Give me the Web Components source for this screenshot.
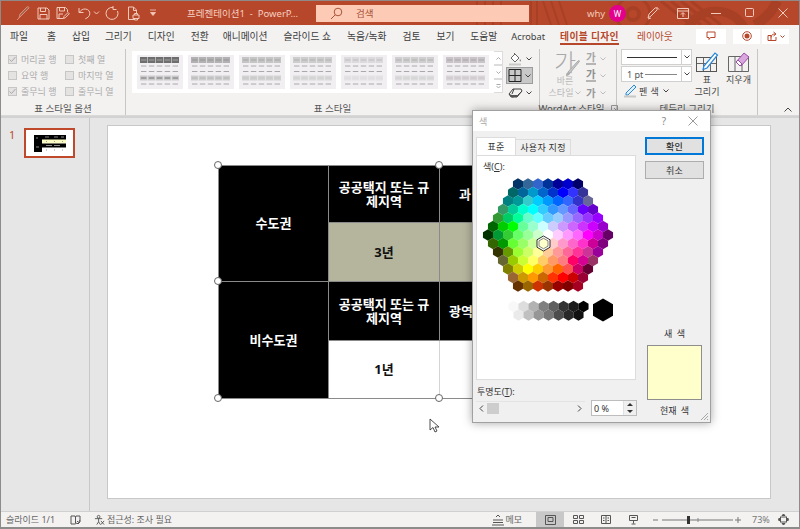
<!DOCTYPE html>
<html lang="ko">
<head>
<meta charset="utf-8">
<title>PowerPoint</title>
<style>
  html, body { margin: 0; padding: 0; background: #fff; overflow: hidden; }
  body { font-family: "Noto Sans", "Noto Sans CJK KR", sans-serif; }
</style>
</head>
<body>
<pp-app>
  <pp-titlebar></pp-titlebar>
  <pp-tabs></pp-tabs>
  <pp-ribbon></pp-ribbon>
  <pp-workspace></pp-workspace>
  <pp-statusbar></pp-statusbar>
  <pp-color-dialog slot="dialog"></pp-color-dialog>
</pp-app>

<script>
const FONT = `"Noto Sans", "Noto Sans CJK KR", sans-serif`;

class PpApp extends HTMLElement {
  constructor() {
    super();
    this.attachShadow({ mode: "open" });
    this.shadowRoot.innerHTML = `
      <style>
        :host {
          display: flex;
          flex-direction: column;
          position: relative;
          box-sizing: border-box;
          width: 800px;
          height: 529px;
          overflow: hidden;
          border-top: 1px solid #8f8a88;
          border-left: 1px solid #8c8c8c;
          border-right: 1px solid #8c8c8c;
          border-bottom: 2px solid #8c8c8c;
          font-family: ${FONT};
        }
      </style>
      <slot></slot>
      <slot name="dialog"></slot>
    `;
  }
}

class PpTitlebar extends HTMLElement {
  constructor() {
    super();
    this.attachShadow({ mode: "open" });
    this.shadowRoot.innerHTML = `
      <style>
        :host {
          display: flex;
          align-items: center;
          position: relative;
          flex: none;
          height: 24px;
          background: #b7472a;
          color: #f6d3c7;
          font-size: 9.5px;
          overflow: hidden;
        }
        svg { display: block; flex: none; }
        .ic { fill: none; stroke: #f3c9bb; stroke-width: 1; }
        .quick { display: flex; align-items: center; width: 186px; padding-left: 15px; box-sizing: border-box; position: relative; }
        .title { width: 129px; white-space: nowrap; color: #f5cfc2; position: relative; }
        .search {
          display: flex; align-items: center; gap: 13px; position: relative;
          width: 213px; height: 17px; box-sizing: border-box; padding-left: 14px;
          background: #fdcbb5; color: #a8543c; font-size: 9.5px;
        }
        .right { display: flex; align-items: center; margin-left: auto; position: relative; }
        .why { color: #f3c9bb; font-size: 9.5px; width: 18px; margin-right: 4px; }
        .avatar {
          width: 17px; height: 17px; border-radius: 50%;
          background: #e3008c; color: #fff; font-size: 8px;
          display: flex; align-items: center; justify-content: center;
          margin-right: 20px;
        }
        .pattern { position: absolute; left: 0; top: 0; }
      </style>
      <svg class="pattern" width="800" height="24" viewBox="0 0 800 24" fill="none" stroke="#a84025">
        <path d="M476 0v24M484 0v24M492 0v24M500 0v24" stroke-width="2"/>
        <path d="M530 0v24M536 0v24M542 0l8 24M550 0l8 24M558 0l8 24" stroke-width="2"/>
        <circle cx="632" cy="13" r="6" stroke-width="4"/>
        <circle cx="632" cy="13" r="17" stroke-width="3"/>
        <path d="M660 0l30 24M670 0l30 24M680 0l30 24M690 0l30 24" stroke-width="3"/>
        <circle cx="715" cy="42" r="32" stroke-width="9"/>
        <path d="M776 0c-4 10-12 18-22 24" stroke-width="10"/>
      </svg>
      <div class="quick">
        <svg class="ic" width="14" height="16" viewBox="0 0 14 16" style="margin-right:7px"><path d="M3 13l1-4 7-7c1-1 2 0 2 1l-7 7z" fill="#a8644f" stroke="#d98d78"/><path d="M1 15l2-2" stroke="#d98d78"/></svg>
        <svg class="ic" width="13" height="13" viewBox="0 0 13 13" style="margin-right:6px"><path d="M1 1h9l2 2v9H1zM3.500 1v3.500h5V1M3 12V7.500h7V12"/></svg>
        <svg class="ic" width="14" height="14" viewBox="0 0 14 14" style="margin-right:7px"><path d="M7 12.500H1v-11h8.500l2 2V6M3.500 2v3h5V2M3 12V8h4"/><path d="M7.500 12.500l.5-2 4-4 1.300 1.300-4 4z"/></svg>
        <svg class="ic" width="15" height="13" viewBox="0 0 15 13" style="margin-right:1px"><path d="M2 1v4.500h4.500M2.300 5.300C4 3 6 1.800 8.500 2c3 .3 4.500 2.500 4.300 4.800-.2 2.300-2 4-4.500 5"/></svg>
        <svg width="7" height="4" viewBox="0 0 7 4" style="margin-right:5px"><path d="M1 .5l2.500 2.500L6 .5" fill="none" stroke="#f3c9bb"/></svg>
        <svg class="ic" width="14" height="14" viewBox="0 0 14 14" style="margin-right:8px"><path d="M8 1.500A6 6 0 1 0 12.500 5M8 0v3.500h3.500"/></svg>
        <svg class="ic" width="13" height="15" viewBox="0 0 13 15" style="margin-right:9px"><path d="M7 13.500H1.500V1h5l3 3v3M6.500 1v3.500h3"/><path d="M6 9h6v3.500H6zM7.500 9V7.500h3V9M7.500 12v2h3v-2"/></svg>
        <svg width="8" height="8" viewBox="0 0 8 8"><path d="M1 1h6M1.500 3.500h5L4 6.500z" fill="#f3c9bb" stroke="#f3c9bb" stroke-width=".8"/></svg>
      </div>
      <div class="title">프레젠테이션1&nbsp; -&nbsp; PowerP...</div>
      <div class="search">
        <svg class="ic" width="13" height="13" viewBox="0 0 13 13" style="stroke:#a8543c"><circle cx="8" cy="5" r="3.800"/><path d="M5.200 7.800L1 12"/></svg>
        <span>검색</span>
      </div>
      <div class="right">
        <span class="why">why</span>
        <span class="avatar">W</span>
        <svg class="ic" width="14" height="14" viewBox="0 0 14 14" style="margin-right:17px"><path d="M2 12l1-4 6-6c1-1 3 1 2 2l-6 6zM10.500 1L13 3.500M2 13l3-1"/></svg>
        <svg class="ic" width="12" height="11" viewBox="0 0 12 11" style="margin-right:22px"><path d="M.500.500h11v10h-11zM.500 3h11M6 5v4M4 6.500l2-2 2 2"/></svg>
        <svg class="ic" width="10" height="3" viewBox="0 0 10 3" style="margin-right:24px"><path d="M0 1.500h10"/></svg>
        <svg class="ic" width="10" height="10" viewBox="0 0 10 10" style="margin-right:23px"><rect x=".5" y=".5" width="8" height="8" rx="1"/></svg>
        <svg class="ic" width="10" height="10" viewBox="0 0 10 10" style="margin-right:11px"><path d="M.500.500l9 9M9.500.500l-9 9"/></svg>
      </div>
    `;
  }
}

class PpTab extends HTMLElement {
  constructor() {
    super();
    this.attachShadow({ mode: "open" });
    this.shadowRoot.innerHTML = `
      <style>
        :host {
          display: flex;
          align-items: center;
          flex: none;
          height: 22px;
          position: relative;
          color: #3d3d3d;
          font-size: 9.75px;
          white-space: nowrap;
        }
        :host([context]) { color: #b7472a; }
        :host([active]) { font-weight: 700; letter-spacing: .35px; }
        :host([active])::after {
          content: "";
          position: absolute; left: 0; right: 0; bottom: 2px; height: 2px;
          background: #b7472a;
        }
      </style>
      <slot></slot>
    `;
  }
}

class PpTabs extends HTMLElement {
  constructor() {
    super();
    this.attachShadow({ mode: "open" });
    // second value nudges the tab so it lands where the reference has it
    const tabs = [["파일", 0], ["홈", 3], ["삽입", 0], ["그리기", -1], ["디자인", 0], ["전환", 0], ["애니메이션", -2], ["슬라이드 쇼", 0], ["녹음/녹화", 0], ["검토", 0], ["보기", 0], ["도움말", 0], ["Acrobat", -2]];
    this.shadowRoot.innerHTML = `
      <style>
        :host {
          display: flex;
          align-items: center;
          flex: none;
          height: 22px;
          background: #f3f2f1;
          padding: 0 10px 0 9px;
          gap: 16px;
        }
        .btn {
          display: flex; align-items: center; justify-content: center; flex: none;
          height: 15px; background: #fff; box-sizing: border-box;
        }
        .btns { display: flex; margin-left: auto; }
      </style>
      ${tabs.map((t) => `<pp-tab style="margin-left:${t[1]}px${t[0] === "Acrobat" ? ";font-size:9.25px" : ""}">${t[0]}</pp-tab>`).join("")}
      <pp-tab active context style="margin-left:-1px">테이블 디자인</pp-tab>
      <pp-tab context style="margin-left:2px">레이아웃</pp-tab>
      <div class="btns">
        <div class="btn" style="width:30px">
          <svg width="10" height="10" viewBox="0 0 10 10" fill="none" stroke="#b7472a"><path d="M1 1h8v5.500H4.500L3 8.500v-2H1z"/></svg>
        </div>
        <div class="btn" style="width:27px;margin-left:7px">
          <svg width="10" height="10" viewBox="0 0 10 10"><circle cx="5" cy="5" r="4.300" fill="none" stroke="#b7472a"/><circle cx="5" cy="5" r="2.500" fill="#b7472a"/></svg>
        </div>
        <div class="btn" style="width:27px;gap:3px;margin-left:2px">
          <svg width="10" height="10" viewBox="0 0 10 10" fill="none" stroke="#b7472a"><path d="M1 4.500h3v5h5V6M1 4.500v5h3M4 6.500C4 4 6 3 8 3M6.500 1L9 3 6.500 5"/></svg>
          <svg width="5" height="3" viewBox="0 0 5 3"><path d="M.5.500l2 2 2-2" fill="none" stroke="#b7472a"/></svg>
        </div>
      </div>
    `;
  }
}

class PpCheck extends HTMLElement {
  constructor() {
    super();
    this.attachShadow({ mode: "open" });
    const mark = this.hasAttribute("checked")
      ? `<path d="M1.500 4.500l2 2 4-4.500" fill="none" stroke="#a8a8a8" stroke-width="1"/>`
      : "";
    this.shadowRoot.innerHTML = `
      <style>
        :host {
          display: flex; align-items: center; gap: 4px;
          color: #ababab; font-size: 9px; white-space: nowrap; height: 16px;
        }
        svg { display: block; flex: none; }
      </style>
      <svg width="9" height="9" viewBox="0 0 9 9"><rect x=".5" y=".5" width="8" height="8" fill="#e4e3e2" stroke="#c6c6c6"/>${mark}</svg>
      <slot></slot>
    `;
  }
}

class PpGroup extends HTMLElement {
  constructor() {
    super();
    this.attachShadow({ mode: "open" });
    const launcher = this.hasAttribute("launcher")
      ? `<svg width="7" height="7" viewBox="0 0 7 7" style="flex:none;margin-left:6px"><path d="M.5 6.500v-6h6v6zM3 3l2.500 2.500" fill="none" stroke="#9a9a9a"/></svg>`
      : "";
    this.shadowRoot.innerHTML = `
      <style>
        :host {
          display: flex; flex-direction: column;
          flex: none; box-sizing: border-box; height: 66px; margin-top: 2px;
          border-right: 1px solid #c8c6c4;
          position: relative;
        }
        .body { flex: 1; min-height: 0; display: flex; }
        .label {
          display: flex; align-items: center; justify-content: center;
          height: 13px; line-height: 13px;
          color: #565656; font-size: 9.5px; white-space: nowrap;
        }
      </style>
      <div class="body"><slot></slot></div>
      <div class="label"><span>${this.getAttribute("label") || ""}</span>${launcher}</div>
    `;
  }
}

class PpStyleThumb extends HTMLElement {
  constructor() {
    super();
    this.attachShadow({ mode: "open" });
    const head = this.getAttribute("head");
    const dash = this.getAttribute("dash");
    const band = this.getAttribute("band");
    let cells = "";
    for (let i = 0; i < 5; i++) {
      const x = 3 + i * 7.9;
      cells += `<rect x="${x}" y="2" width="7.400" height="6" fill="${head}"/>`;
      cells += `<path d="M${x + 1} 5h5.400" stroke="${dash}" stroke-width=".8"/>`;
      [11, 16.5, 23, 29].forEach((y, r) => {
        if (r === 2) cells += `<rect x="${x}" y="${y - 2.5}" width="7.400" height="5" fill="${band}"/>`;
        cells += `<path d="M${x + 1} ${y}h5.400" stroke="${r === 2 ? head : "#a0a0a0"}" stroke-width=".9"/>`;
      });
    }
    this.shadowRoot.innerHTML = `
      <style>
        :host { display: block; flex: none; width: 45.500px; height: 34px; background: #f2eff3; }
        svg { display: block; }
      </style>
      <svg width="46" height="34" viewBox="0 0 46 34">${cells}</svg>
    `;
  }
}

class PpRibbon extends HTMLElement {
  constructor() {
    super();
    this.attachShadow({ mode: "open" });
    const thumbs = [
      ["#6e6e6e", "#b0b0b0", "#c9c9c9"],
      ["#b2b2b2", "#8d8d8d", "#cdcdcd"],
      ["#c5c5c5", "#a0a0a0", "#d2d2d2"],
      ["#cdcdcd", "#a8a8a8", "#dadada"],
      ["#dcdadc", "#b5b5b5", "#e4e2e4"],
      ["#cfcfcf", "#a8a8a8", "#dcdcdc"],
      ["#c8c4c8", "#a0a0a0", "#d8d4d8"],
    ];
    const chev = `<svg class="chev" width="6" height="4" viewBox="0 0 6 4"><path d="M.5.500L3 3 5.500.500" fill="none" stroke="#444" stroke-width="1"/></svg>`;
    const chevG = `<svg class="chev" width="6" height="4" viewBox="0 0 6 4"><path d="M.5.500L3 3 5.500.500" fill="none" stroke="#bdbdbd" stroke-width="1"/></svg>`;
    this.shadowRoot.innerHTML = `
      <style>
        :host {
          display: flex;
          flex: none;
          height: 69px;
          box-sizing: border-box;
          background: #f3f2f1;
          border-bottom: 1px solid #d8d8d8;
          font-size: 9px;
        }
        svg { display: block; flex: none; }
        .checks {
          display: grid; grid-template-columns: 57px auto;
          padding: 2px 0 0 7px; align-content: start;
        }
        .gallery-wrap { display: flex; padding: 2px 0 0 6px; }
        .gallery {
          display: flex; gap: 5.500px; align-items: center;
          width: 362px; height: 42px; box-sizing: border-box; padding-left: 5px;
          background: #fff; overflow: hidden;
        }
        .scroll { display: flex; flex-direction: column; width: 9px; height: 42px; }
        .scroll div {
          flex: 1; display: flex; align-items: center; justify-content: center;
          background: #fff; border: 1px solid #dcdcdc; border-left: 0;
        }
        .tools { display: flex; flex-direction: column; width: 32px; margin-left: 3px; }
        .tool { display: flex; align-items: center; gap: 3px; height: 17px; padding-left: 2px; width: 27px; box-sizing: border-box; }
        .tool.on { background: #c8c8c8; border: 1px solid #9d9d9d; padding-left: 1px; }
        .art { display: flex; padding-left: 6px; color: #a6a6a6; }
        .art-big { width: 38px; display: flex; flex-direction: column; align-items: center; }
        .big-ga { position: relative; font-size: 24px; line-height: 26px; height: 26px; color: #a9a9a9; font-weight: 300; }
        .art-big span { font-size: 9px; line-height: 12px; color: #b8b8b8; white-space: nowrap; }
        .art-small { display: flex; flex-direction: column; margin-left: 2px; padding-top: 1px; }
        .art-small div {
          display: flex; align-items: center; gap: 4px; height: 17px;
          font-size: 10.5px; font-weight: 700; color: #a6a6a6;
        }
        .borders { display: flex; padding-left: 4px; }
        .lines { display: flex; flex-direction: column; width: 71px; }
        .sel {
          display: flex; align-items: center; height: 16px; width: 71px; box-sizing: border-box; flex: none;
          background: #fff; border: 1px solid #d0d0d0; margin-bottom: 1px; color: #555; font-size: 9px; white-space: nowrap;
        }
        .sel .val { flex: 1; display: flex; align-items: center; padding: 0 5px; gap: 2px; min-width: 0; }
        .sel .drop { flex: none; width: 9px; height: 100%; border-left: 1px solid #d0d0d0; display: flex; align-items: center; justify-content: center; }
        .pen { display: flex; align-items: center; gap: 2px; color: #444; padding: 1px 0 0 3px; font-size: 9px; letter-spacing: .5px; white-space: nowrap; }
        .big { display: flex; flex-direction: column; align-items: center; flex: none; padding-top: 1px; color: #444; font-size: 9px; line-height: 12px; text-align: center; white-space: nowrap; }
        .collapse { display: flex; align-items: flex-end; flex: 1; justify-content: flex-end; padding: 0 7px 3px 0; }
      </style>
      <pp-group label="표 스타일 옵션" style="width:125px">
        <div class="checks">
          <pp-check checked>머리글 행</pp-check><pp-check>첫째 열</pp-check>
          <pp-check>요약 행</pp-check><pp-check>마지막 열</pp-check>
          <pp-check checked>줄무늬 행</pp-check><pp-check>줄무늬 열</pp-check>
        </div>
      </pp-group>
      <pp-group label="표 스타일" style="width:414px">
        <div class="gallery-wrap">
          <div class="gallery">
            ${thumbs.map((t) => `<pp-style-thumb head="${t[0]}" dash="${t[1]}" band="${t[2]}"></pp-style-thumb>`).join("")}
          </div>
          <div class="scroll">
            <div><svg width="5" height="3" viewBox="0 0 5 3"><path d="M.5 2.500l2-2 2 2" fill="none" stroke="#aaa"/></svg></div>
            <div><svg width="5" height="3" viewBox="0 0 5 3"><path d="M.5.500l2 2 2-2" fill="none" stroke="#aaa"/></svg></div>
            <div><svg width="5" height="5" viewBox="0 0 5 5"><path d="M.5.500h4M.5 2l2 2 2-2" fill="none" stroke="#aaa"/></svg></div>
          </div>
          <div class="tools">
            <div class="tool" style="height:16px">
              <svg width="15" height="14" viewBox="0 0 15 14"><path d="M3 6l4-4 4 4-4 4z" fill="#fff" stroke="#666"/><path d="M6 1l1 1" stroke="#666"/><path d="M12 7c1 1 1.500 2 .5 2.500-1 0-1-1.500-.5-2.500z" fill="#888"/><rect x="1" y="11.500" width="12" height="2" fill="#c9c9c9"/></svg>
              ${chev}
            </div>
            <div class="tool on">
              <svg width="14" height="13" viewBox="0 0 14 13" fill="none" stroke="#222"><path d="M1 .5h12v12H1zM7 .5v12M1 6.500h12"/></svg>
              ${chev}
            </div>
            <div class="tool" style="height:17px">
              <svg width="15" height="13" viewBox="0 0 15 13"><path d="M1 8l4-5h8l1 2-5 6H3z" fill="#f3f2f1" stroke="#444"/><path d="M1 8l3 3 5-1 5-5M4 8l2-5" fill="none" stroke="#444"/><path d="M1 8l2 3h6l2-2H4z" fill="#555"/></svg>
              ${chev}
            </div>
          </div>
        </div>
      </pp-group>
      <pp-group label="WordArt 스타일" launcher style="width:77px">
        <div class="art">
          <div class="art-big">
            <div class="big-ga">가<svg width="16" height="18" viewBox="0 0 16 18" style="position:absolute;left:11px;top:10px"><path d="M3 13L13 2c1-1 2 0 1 1L5 14" fill="#c9c9c9" stroke="#aaa"/><path d="M1 17c0-3 1-4 3-4 1.500 0 1.500 2 0 3-1 .5-2 1-3 1z" fill="#aaa"/></svg></div>
            <span>바른</span>
            <span style="display:flex;align-items:center;gap:2px">스타일${chevG}</span>
          </div>
          <div class="art-small">
            <div><span style="border-bottom:2px solid #b5b5b5;line-height:11px">가</span>${chevG}</div>
            <div><span style="border-bottom:2px solid #b5b5b5;line-height:11px;color:#8f8f8f">가</span>${chevG}</div>
            <div style="color:#999">가${chevG}</div>
          </div>
        </div>
      </pp-group>
      <pp-group label="테두리 그리기" style="width:141px">
        <div class="borders">
          <div class="lines">
            <div class="sel"><div class="val"><svg width="50" height="3"><path d="M0 1.500h50" stroke="#333" stroke-width="1.200"/></svg></div><div class="drop">${chev}</div></div>
            <div class="sel"><div class="val">1 pt<svg width="32" height="3"><path d="M0 1.500h32" stroke="#888" stroke-width="1"/></svg></div><div class="drop">${chev}</div></div>
            <div class="pen">
              <svg width="13" height="14" viewBox="0 0 13 14"><path d="M2 9L10 1l2 2-8 8H2z" fill="#dff0fb" stroke="#2b88d8"/><rect x="0" y="11.500" width="12" height="2" fill="#c8c8c8"/></svg>
              펜 색
              <svg width="6" height="4" viewBox="0 0 6 4" style="margin-left:2px"><path d="M.5.500L3 3 5.500.500" fill="none" stroke="#444"/></svg>
            </div>
          </div>
          <div class="big" style="width:28px;margin-left:1px">
            <svg width="23" height="23" viewBox="0 0 23 23"><path d="M1 7.500h20M1 13.500h20M7.500 7v14M14.500 7v14" stroke="#666" fill="none"/><rect x=".5" y="7.500" width="20" height="14" fill="none" stroke="#555"/><path d="M8 16L19 3l2.500 2L11 18l-4 1.500z" fill="#fff" stroke="#2b88d8" stroke-width="1.200"/></svg>
            <span style="margin-top:1px">표</span><span>그리기</span>
          </div>
          <div class="big" style="width:27px;margin-left:4px">
            <svg width="23" height="23" viewBox="0 0 23 23"><path d="M1.500 6.500h20v15h-20zM8 6.500v15M15 6.500v15" stroke="#666" fill="none"/><path d="M9 12l8-9 5 4-8 9z" fill="#d9a6dd" stroke="#9a4fa8"/><path d="M9 12l4 4 2-2-4-4z" fill="#fff" stroke="#9a4fa8"/></svg>
            <span style="margin-top:1px">지우개</span>
          </div>
        </div>
      </pp-group>
      <div class="collapse">
        <svg width="8" height="5" viewBox="0 0 8 5"><path d="M.5 4.500L4 1l3.500 3.500" fill="none" stroke="#444"/></svg>
      </div>
    `;
  }
}

class PpWorkspace extends HTMLElement {
  constructor() {
    super();
    this.attachShadow({ mode: "open" });
    this.shadowRoot.innerHTML = `
      <style>
        :host {
          display: flex; flex: 1; min-height: 0;
          background: #e6e6e6;
          border-top: 2px solid #d2d2d2;
        }
        .side {
          width: 89px; box-sizing: border-box; flex: none;
          border-right: 1px solid #c8c8c8;
          display: flex; align-items: flex-start; padding: 10px 0 0 8px;
        }
        .num { color: #c0492b; font-size: 11px; line-height: 13px; width: 15px; flex: none; }
        .thumb {
          width: 51px; height: 30px; box-sizing: border-box; flex: none;
          border: 2px solid #c0492b; background: #fff;
          display: flex; align-items: center; justify-content: center;
        }
        .thumb svg { display: block; }
        .stage { flex: 1; padding: 7px 28px 12px 17px; display: flex; min-width: 0; }
      </style>
      <div class="side">
        <span class="num">1</span>
        <div class="thumb">
          <svg width="32" height="17" viewBox="0 0 32 17">
            <rect x="0" y="0" width="32" height="5" fill="#000"/>
            <rect x="0" y="5" width="8" height="12" fill="#000"/>
            <rect x="8" y="4.500" width="24" height="4" fill="#fbfbc4"/>
            <rect x="8" y="8.500" width="24" height="4" fill="#000"/>
            <path d="M11 2h4M20 2h4M27 2h3M12 10.500h6M20 10.500h6M2 3h2M2 12h3" stroke="#888" stroke-width="1"/>
            <path d="M12 6.500h1M20 6.500h1M28 6.500h1M12 15h1M20 15h1M28 15h1" stroke="#999" stroke-width="1"/>
          </svg>
        </div>
      </div>
      <div class="stage"><pp-slide></pp-slide></div>
    `;
  }
}

class PpSlide extends HTMLElement {
  constructor() {
    super();
    this.attachShadow({ mode: "open" });
    this.shadowRoot.innerHTML = `
      <style>
        :host {
          display: block; flex: 1; box-sizing: border-box; background: #fff;
          border: 1px solid #c8c8c8; padding: 39px 0 0 110px; position: relative;
        }
      </style>
      <pp-table></pp-table>
    `;
  }
}

class PpCell extends HTMLElement {
  constructor() {
    super();
    this.attachShadow({ mode: "open" });
    this.shadowRoot.innerHTML = `
      <style>
        :host {
          display: flex; align-items: center; justify-content: center; text-align: center;
          box-sizing: border-box; padding: 0 7px; overflow: hidden;
          background: #000; color: #fff;
          font-size: 13px; font-weight: 700; line-height: 14.500px;
          border-right: 1px solid #8a8a8a; border-bottom: 1px solid #8a8a8a;
        }
        :host([kind="tan"]) { background: #b5b59e; color: #111; }
        :host([kind="white"]) { background: #fff; color: #111; border-right-color: #d4d4d4; }
      </style>
      <slot></slot>
    `;
  }
}

class PpTable extends HTMLElement {
  constructor() {
    super();
    this.attachShadow({ mode: "open" });
    this.shadowRoot.innerHTML = `
      <style>
        :host {
          display: grid; position: relative; box-sizing: border-box;
          grid-template-columns: 110px 111px 111px 110px;
          grid-template-rows: 57px 59px 59px 58px;
          width: 442px; height: 234px;
          border-top: 1px solid #8a8a8a; border-left: 1px solid #8a8a8a;
        }
        .handle {
          position: absolute; width: 6px; height: 6px; border-radius: 50%;
          background: #fff; border: 1px solid #666; box-sizing: content-box;
          transform: translate(-50%, -50%);
        }
      </style>
      <pp-cell style="grid-row:span 2">수도권</pp-cell>
      <pp-cell>공공택지 또는 규제지역</pp-cell>
      <pp-cell style="justify-content:flex-start;padding-left:19px">과</pp-cell>
      <pp-cell></pp-cell>
      <pp-cell kind="tan">3년</pp-cell>
      <pp-cell kind="tan"></pp-cell>
      <pp-cell kind="tan"></pp-cell>
      <pp-cell style="grid-row:span 2">비수도권</pp-cell>
      <pp-cell>공공택지 또는 규제지역</pp-cell>
      <pp-cell style="justify-content:flex-start;padding-left:9px">광역</pp-cell>
      <pp-cell></pp-cell>
      <pp-cell kind="white">1년</pp-cell>
      <pp-cell kind="white"></pp-cell>
      <pp-cell kind="white"></pp-cell>
      <span class="handle" style="left:-1px;top:-1px"></span>
      <span class="handle" style="left:220px;top:-1px"></span>
      <span class="handle" style="left:-1px;top:115px"></span>
      <span class="handle" style="left:-1px;top:232px"></span>
      <span class="handle" style="left:220px;top:232px"></span>
      <svg width="12" height="15" viewBox="0 0 12 15" style="position:absolute;left:210px;top:252px"><path d="M1 1v11l3-2.500L6 14l2-1-2-4h4z" fill="#fff" stroke="#222" stroke-width=".8"/></svg>
    `;
  }
}

class PpStatusbar extends HTMLElement {
  constructor() {
    super();
    this.attachShadow({ mode: "open" });
    this.shadowRoot.innerHTML = `
      <style>
        :host {
          display: flex; align-items: center; flex: none; height: 16px;
          background: #f3f2f1; color: #666; font-size: 9px;
          border-top: 1px solid #d0d0d0; box-sizing: border-box; padding-left: 5px;
          white-space: nowrap;
        }
        svg { display: block; flex: none; }
        .left { display: flex; align-items: center; }
        .right { display: flex; align-items: center; margin-left: auto; height: 100%; }
        .view { width: 28px; height: 100%; display: flex; align-items: center; justify-content: center; flex: none; }
        .view.on { background: #c8c8c8; }
        .s { fill: none; stroke: #555; stroke-width: 1; }
      </style>
      <div class="left">
        <span style="width:49px">슬라이드 1/1</span>
        <svg class="s" width="11" height="10" viewBox="0 0 11 10" style="margin-left:15px"><path d="M1 1h4l.500 1 .500-1h4v6l-2 2-1-1-2 1H1zM5.500 2v6M7 6l1.500 1.500L10 5"/></svg>
        <svg class="s" width="11" height="12" viewBox="0 0 12 12" style="margin:0 2px 0 13px"><circle cx="5" cy="2.500" r="1.500"/><path d="M1 4.500h8M5 4.500V8L3 11M5 8l2 3M7.500 7l3.500 4M11 7l-3.500 4"/></svg>
        <span>접근성: 조사 필요</span>
      </div>
      <div class="right">
        <svg class="s" width="12" height="12" viewBox="0 0 12 12"><path d="M0 11h12M1 8.500h10M1 6h10M4 3l2-2 2 2"/></svg>
        <span style="margin:0 14px 0 1px">메모</span>
        <div class="view on"><svg class="s" width="11" height="10" viewBox="0 0 11 10"><path d="M.5.500h10v9H.500zM3 2.500h5v4H3z"/></svg></div>
        <div class="view"><svg class="s" width="11" height="9" viewBox="0 0 11 9"><path d="M.5.500h4v3h-4zM6.500.500h4v3h-4zM.5 5.500h4v3h-4zM6.500 5.500h4v3h-4z"/></svg></div>
        <div class="view"><svg class="s" width="10" height="10" viewBox="0 0 10 10"><path d="M.5.500h9v8h-9zM5 .5v8M2 3h1.500M6.500 3H8M2 5.500h1.500M6.500 5.500H8"/></svg></div>
        <div class="view"><svg class="s" width="10" height="10" viewBox="0 0 10 10"><path d="M.5.500h8v5h-8zM4.500 5.500v3M2.500 9h4M2.500 2.500h4"/></svg></div>
        <svg width="88" height="10" viewBox="0 0 88 10" style="margin-left:5px">
          <path d="M0 5h5M9 5h71M82 5h6M85 2v6" stroke="#777" fill="none"/>
          <path d="M45 3v4" stroke="#888"/>
          <rect x="34" y="1" width="3" height="8" fill="#333"/>
        </svg>
        <span style="margin-left:11px;width:17px;color:#777">73%</span>
        <svg class="s" width="11" height="11" viewBox="0 0 11 11" style="margin:0 10px 0 9px"><rect x="2.500" y="3" width="6" height="5"/><path d="M5.500 0L4 1.500h3zM5.500 11L4 9.500h3zM0 5.500L1.500 4v3zM11 5.500L9.500 4v3z" fill="#555"/></svg>
      </div>
    `;
  }
}

class PpHexPicker extends HTMLElement {
  constructor() {
    super();
    this.attachShadow({ mode: "open" });
    const rows = [
      "003366 336699 3366CC 003399 000099 0000CC 000066",
      "006666 006699 0099CC 0066CC 0033CC 0000FF 3333FF 333399",
      "008080 009999 33CCCC 00CCFF 0099FF 0066FF 3366FF 3333CC 666699",
      "339966 00CC99 00FFCC 00FFFF 33CCFF 3399FF 6699FF 6666FF 6600FF 6600CC",
      "339933 00CC66 00FF99 66FFCC 66FFFF 66CCFF 99CCFF 9999FF 9966FF 9933FF 9900FF",
      "006600 00CC00 00FF00 66FF99 99FFCC CCFFFF CCCCFF CC99FF CC66FF CC33FF CC00FF 9900CC",
      "003300 009933 33CC33 66FF66 99FF99 CCFFCC FFFFFF FFCCFF FF99FF FF66FF FF00FF CC00CC 660066",
      "336600 009900 66FF33 99FF66 CCFF99 FFFFCC FFCCCC FF99CC FF66CC FF33CC CC0099 800080",
      "333300 669900 99FF33 CCFF66 FFFF99 FFCC99 FF9999 FF6699 FF3399 CC3399 990099",
      "666633 99CC00 CCFF33 FFFF66 FFCC66 FF9966 FF7C80 FF0066 D60093 993366",
      "808000 CCCC00 FFFF00 FFCC00 FF9933 FF6600 FF5050 CC0066 660033",
      "996633 CC9900 FF9900 CC6600 FF3300 FF0000 CC0000 990033",
      "663300 996600 CC3300 993300 990000 800000 A50021",
    ];
    const greys = [
      ["F8F8F8", "DDDDDD", "B2B2B2", "808080", "5F5F5F", "333333", "1C1C1C", "000000"],
      ["EAEAEA", "C0C0C0", "969696", "777777", "4D4D4D", "292929", "111111"],
    ];
    const hex = (cx, cy, w, h) => {
      const pts = [[0, -h / 2], [w / 2, -h / 4], [w / 2, h / 4], [0, h / 2], [-w / 2, h / 4], [-w / 2, -h / 4]];
      return pts.map((p) => `${(cx + p[0]).toFixed(2)},${(cy + p[1]).toFixed(2)}`).join(" ");
    };
    let out = "";
    rows.forEach((row, r) => {
      const cols = row.split(" ");
      const y = 183 + r * 8.5;
      cols.forEach((c, i) => {
        const x = 548 + (i - (cols.length - 1) / 2) * 10;
        out += `<polygon points="${hex(x, y, 10.1, 11.4)}" fill="#${c}"/>`;
      });
    });
    greys.forEach((row, r) => {
      const y = 305.5 + r * 8.5;
      row.forEach((c, i) => {
        const x = 548.5 + (i - (row.length - 1) / 2) * 10;
        out += `<polygon points="${hex(x, y, 10.1, 11.4)}" fill="#${c}"/>`;
      });
    });
    out += `<polygon points="${hex(603, 309, 20, 23)}" fill="#000"/>`;
    out += `<polygon points="${hex(543.5, 242.5, 13, 15)}" fill="#fff" stroke="#000" stroke-width=".8"/>`;
    out += `<polygon points="${hex(543.5, 242.5, 9, 10.5)}" fill="#ffffcc" stroke="#333" stroke-width=".6"/>`;
    this.shadowRoot.innerHTML = `
      <style>
        :host { display: block; width: 158px; height: 150px; }
        svg { display: block; }
      </style>
      <svg width="158" height="150" viewBox="477 175 158 150">${out}</svg>
    `;
  }
}

class PpColorDialog extends HTMLElement {
  constructor() {
    super();
    this.attachShadow({ mode: "open" });
    this.shadowRoot.innerHTML = `
      <style>
        :host {
          position: absolute; left: 471px; top: 109px;
          width: 239px; height: 313px; box-sizing: border-box;
          display: flex; flex-direction: column;
          background: #f0f0f0; border: 1px solid #a0a0a0;
          box-shadow: 0 0 9px rgba(0,0,0,.35);
          font-size: 9px; color: #333;
        }
        svg { display: block; flex: none; }
        .head {
          flex: none; height: 20px; background: #fff;
          display: flex; align-items: center; padding: 0 12px 0 6px; color: #a8a8a8;
        }
        .head .q { margin-left: auto; margin-right: 22px; color: #888; font-size: 10px; }
        .body { flex: 1; display: flex; padding: 6px 0 0 3px; min-height: 0; position: relative; }
        .left { width: 161px; flex: none; display: flex; flex-direction: column; }
        .tabs { display: flex; align-items: flex-end; height: 18px; flex: none; }
        .tab {
          display: flex; align-items: center; justify-content: center;
          box-sizing: border-box; white-space: nowrap; letter-spacing: .3px;
        }
        .tab.on { width: 40px; height: 18px; background: #fff; border: 1px solid #dcdcdc; border-bottom: 0; }
        .tab.off { width: 55px; height: 16px; background: #f0f0f0; border: 1px solid #dcdcdc; border-bottom: 0; border-left: 0; }
        .panel {
          flex: none; width: 160px; height: 225px; box-sizing: border-box;
          background: #fff; border: 1px solid #dcdcdc; padding: 5px 0 0 0;
        }
        .panel .lbl { padding-left: 6px; height: 15px; line-height: 12px; }
        u { text-decoration: underline; }
        .trans { padding: 6px 0 0 1px; height: 13px; line-height: 12px; white-space: nowrap; }
        .tr-row { display: flex; align-items: center; gap: 6px; margin-top: 1px; }
        .bar {
          width: 109px; height: 15px; box-sizing: border-box; border-top: 1px solid #e4e4e4;
          display: flex; align-items: center; justify-content: space-between; padding: 0 3px;
        }
        .bar i { display: block; width: 12px; height: 11px; background: #cdcdcd; margin: 0 auto 0 3px; }
        .spin {
          width: 46px; height: 16px; box-sizing: border-box; background: #fff;
          border: 1px solid #bdbdbd; display: flex; align-items: center; padding-left: 2px; font-size: 9px;
        }
        .spin .arr { margin-left: auto; width: 12px; height: 100%; display: flex; flex-direction: column; border-left: 1px solid #e0e0e0; background: #f0f0f0; }
        .spin .arr b { flex: 1; display: flex; align-items: center; justify-content: center; }
        .right {
          flex: 1; display: flex; flex-direction: column; align-items: center;
          padding-left: 8px; padding-right: 6px; box-sizing: border-box;
        }
        .btn {
          width: 59px; box-sizing: border-box; background: #e1e1e1; border: 1px solid #adadad;
          display: flex; align-items: center; justify-content: center; flex: none;
          letter-spacing: .3px;
        }
        .btn.def { height: 18px; border: 2px solid #0078d7; margin-bottom: 6px; font-weight: 500; }
        .btn.oth { height: 18px; }
        .new { margin-top: auto; margin-bottom: 5px; line-height: 12px; word-spacing: 2px; }
        .swatch { width: 55px; height: 55px; box-sizing: border-box; background: #ffffcc; border: 1px solid #8e8e8e; flex: none; }
        .cur { margin: 5px 0 5px; line-height: 12px; word-spacing: 2px; }
        .grip { position: absolute; right: 1px; bottom: 1px; }
      </style>
      <div class="head">
        <span>색</span>
        <span class="q">?</span>
        <svg width="10" height="10" viewBox="0 0 10 10"><path d="M.5.500l9 9M9.500.500l-9 9" fill="none" stroke="#999"/></svg>
      </div>
      <div class="body">
        <div class="left">
          <div class="tabs">
            <div class="tab on">표준</div>
            <div class="tab off">사용자 지정</div>
          </div>
          <div class="panel">
            <div class="lbl">색(<u>C</u>):</div>
            <pp-hex-picker></pp-hex-picker>
          </div>
          <div class="trans">투명도(<u>T</u>):</div>
          <div class="tr-row">
            <div class="bar">
              <svg width="5" height="7" viewBox="0 0 5 7"><path d="M4 .5L1 3.500l3 3" fill="none" stroke="#444"/></svg>
              <i></i>
              <svg width="5" height="7" viewBox="0 0 5 7"><path d="M1 .5l3 3-3 3" fill="none" stroke="#444"/></svg>
            </div>
            <div class="spin">0 %
              <div class="arr">
                <b><svg width="6" height="3" viewBox="0 0 6 3"><path d="M3 0l3 3H0z" fill="#333"/></svg></b>
                <b><svg width="6" height="3" viewBox="0 0 6 3"><path d="M3 3l3-3H0z" fill="#333"/></svg></b>
              </div>
            </div>
          </div>
        </div>
        <div class="right">
          <div class="btn def">확인</div>
          <div class="btn oth">취소</div>
          <div class="new">새 색</div>
          <div class="swatch"></div>
          <div class="cur">현재 색</div>
        </div>
        <svg class="grip" width="9" height="9" viewBox="0 0 9 9"><path d="M8 1L1 8M8 4L4 8M8 7L7 8" stroke="#a8a8a8"/></svg>
      </div>
    `;
  }
}

customElements.define("pp-app", PpApp);
customElements.define("pp-titlebar", PpTitlebar);
customElements.define("pp-tab", PpTab);
customElements.define("pp-tabs", PpTabs);
customElements.define("pp-check", PpCheck);
customElements.define("pp-group", PpGroup);
customElements.define("pp-style-thumb", PpStyleThumb);
customElements.define("pp-ribbon", PpRibbon);
customElements.define("pp-workspace", PpWorkspace);
customElements.define("pp-slide", PpSlide);
customElements.define("pp-cell", PpCell);
customElements.define("pp-table", PpTable);
customElements.define("pp-statusbar", PpStatusbar);
customElements.define("pp-hex-picker", PpHexPicker);
customElements.define("pp-color-dialog", PpColorDialog);
</script>
</body>
</html>
